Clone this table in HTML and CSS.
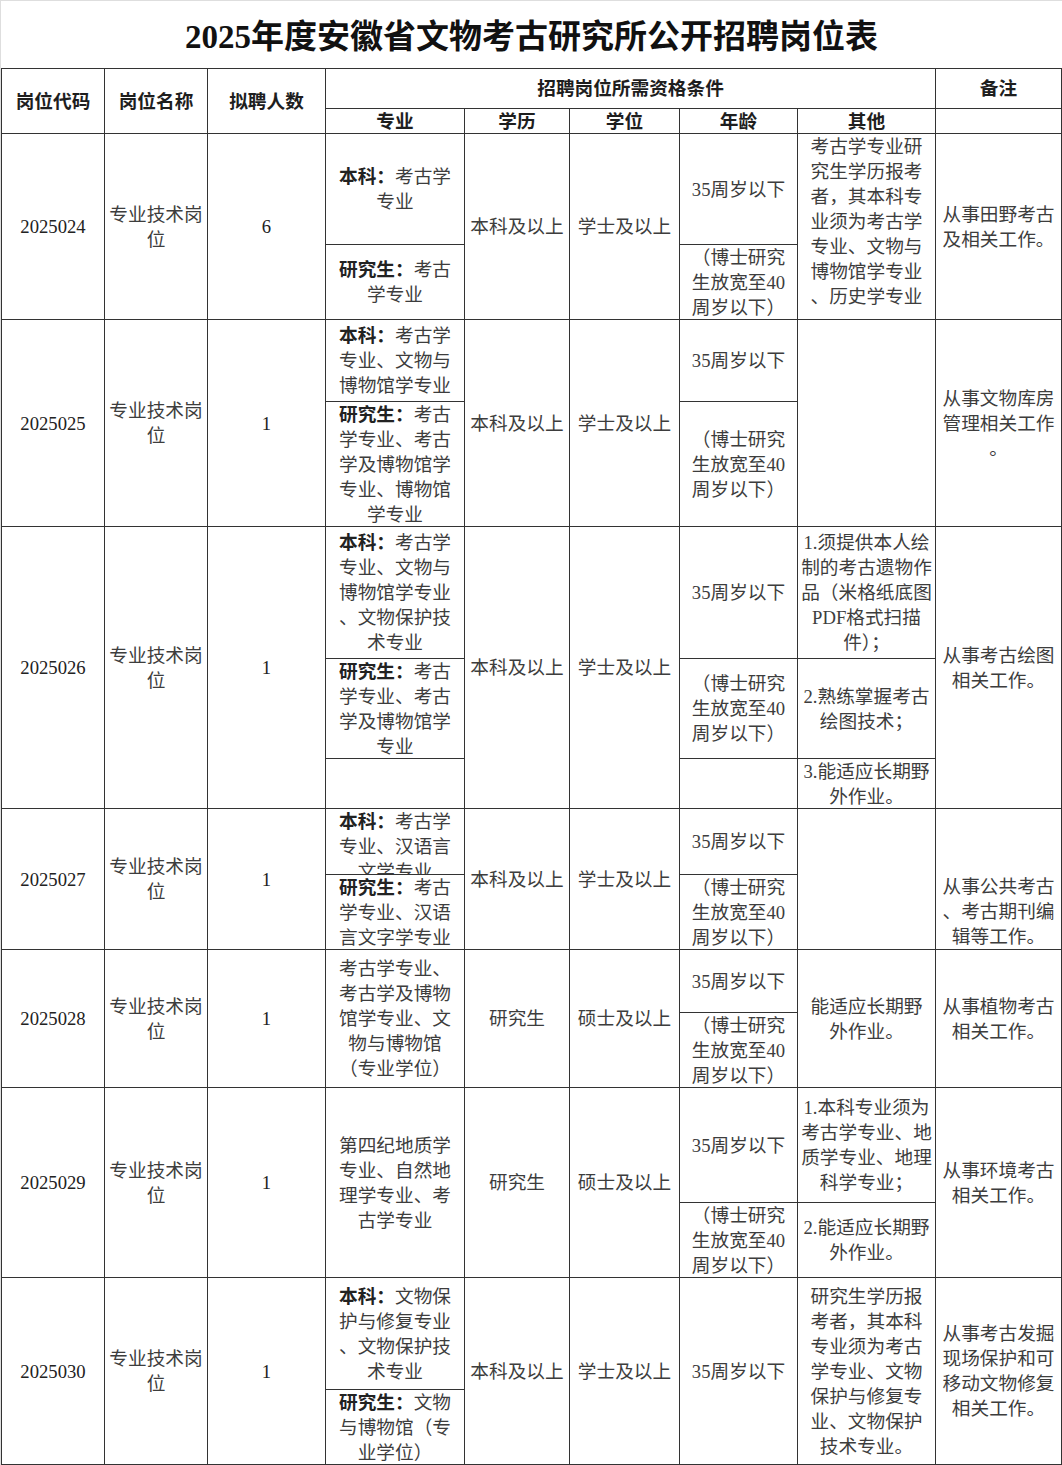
FILE: index.html
```html
<!DOCTYPE html>
<html lang="zh-CN">
<head>
<meta charset="utf-8">
<title>2025年度安徽省文物考古研究所公开招聘岗位表</title>
<link rel="stylesheet" href="styles.css">
</head>
<body>
<div class="page">
  <h1 class="title">2025年度安徽省文物考古研究所公开招聘岗位表</h1>
  <div class="table">
    <div class="row head">
      <div class="cell code span"><p>岗位代码</p></div>
      <div class="cell name span"><p>岗位名称</p></div>
      <div class="cell count span"><p>拟聘人数</p></div>
      <div class="cell quals"><p>招聘岗位所需资格条件</p></div>
      <div class="cell note"><p>备注</p></div>
      <div class="cell major"><p>专业</p></div>
      <div class="cell edu"><p>学历</p></div>
      <div class="cell degree"><p>学位</p></div>
      <div class="cell age"><p>年龄</p></div>
      <div class="cell other"><p>其他</p></div>
      <div class="cell note"></div>
    </div>

    <div class="row r24">
      <div class="cell code span"><p>2025024</p></div>
      <div class="cell name span"><p>专业技术岗<br>位</p></div>
      <div class="cell count span"><p>6</p></div>
      <div class="cell major"><p><b>本科：</b>考古学<br>专业</p></div>
      <div class="cell edu span"><p>本科及以上</p></div>
      <div class="cell degree span"><p>学士及以上</p></div>
      <div class="cell age"><p>35周岁以下</p></div>
      <div class="cell other span top"><p>考古学专业研<br>究生学历报考<br>者，其本科专<br>业须为考古学<br>专业、文物与<br>博物馆学专业<br>、历史学专业</p></div>
      <div class="cell note span"><p>从事田野考古<br>及相关工作。</p></div>
      <div class="cell major"><p><b>研究生：</b>考古<br>学专业</p></div>
      <div class="cell age"><p>（博士研究<br>生放宽至40<br>周岁以下）</p></div>
    </div>

    <div class="row r25">
      <div class="cell code span"><p>2025025</p></div>
      <div class="cell name span"><p>专业技术岗<br>位</p></div>
      <div class="cell count span"><p>1</p></div>
      <div class="cell major"><p><b>本科：</b>考古学<br>专业、文物与<br>博物馆学专业</p></div>
      <div class="cell edu span"><p>本科及以上</p></div>
      <div class="cell degree span"><p>学士及以上</p></div>
      <div class="cell age"><p>35周岁以下</p></div>
      <div class="cell other span"></div>
      <div class="cell note span"><p>从事文物库房<br>管理相关工作<br>。</p></div>
      <div class="cell major"><p><b>研究生：</b>考古<br>学专业、考古<br>学及博物馆学<br>专业、博物馆<br>学专业</p></div>
      <div class="cell age"><p>（博士研究<br>生放宽至40<br>周岁以下）</p></div>
    </div>

    <div class="row r26">
      <div class="cell code span"><p>2025026</p></div>
      <div class="cell name span"><p>专业技术岗<br>位</p></div>
      <div class="cell count span"><p>1</p></div>
      <div class="cell major"><p><b>本科：</b>考古学<br>专业、文物与<br>博物馆学专业<br>、文物保护技<br>术专业</p></div>
      <div class="cell edu span"><p>本科及以上</p></div>
      <div class="cell degree span"><p>学士及以上</p></div>
      <div class="cell age"><p>35周岁以下</p></div>
      <div class="cell other tight"><p>1.须提供本人绘<br>制的考古遗物作<br>品（米格纸底图<br>PDF格式扫描<br>件）；</p></div>
      <div class="cell note span"><p>从事考古绘图<br>相关工作。</p></div>
      <div class="cell major"><p><b>研究生：</b>考古<br>学专业、考古<br>学及博物馆学<br>专业</p></div>
      <div class="cell age"><p>（博士研究<br>生放宽至40<br>周岁以下）</p></div>
      <div class="cell other tight"><p>2.熟练掌握考古<br>绘图技术；</p></div>
      <div class="cell major"></div>
      <div class="cell age"></div>
      <div class="cell other tight"><p>3.能适应长期野<br>外作业。</p></div>
    </div>

    <div class="row r27">
      <div class="cell code span"><p>2025027</p></div>
      <div class="cell name span"><p>专业技术岗<br>位</p></div>
      <div class="cell count span"><p>1</p></div>
      <div class="cell major"><p><b>本科：</b>考古学<br>专业、汉语言<br>文学专业</p></div>
      <div class="cell edu span"><p>本科及以上</p></div>
      <div class="cell degree span"><p>学士及以上</p></div>
      <div class="cell age"><p>35周岁以下</p></div>
      <div class="cell other span"></div>
      <div class="cell note span bottom"><p>从事公共考古<br>、考古期刊编<br>辑等工作。</p></div>
      <div class="cell major"><p><b>研究生：</b>考古<br>学专业、汉语<br>言文字学专业</p></div>
      <div class="cell age"><p>（博士研究<br>生放宽至40<br>周岁以下）</p></div>
    </div>

    <div class="row r28">
      <div class="cell code span"><p>2025028</p></div>
      <div class="cell name span"><p>专业技术岗<br>位</p></div>
      <div class="cell count span"><p>1</p></div>
      <div class="cell major span"><p>考古学专业、<br>考古学及博物<br>馆学专业、文<br>物与博物馆<br>（专业学位）</p></div>
      <div class="cell edu span"><p>研究生</p></div>
      <div class="cell degree span"><p>硕士及以上</p></div>
      <div class="cell age"><p>35周岁以下</p></div>
      <div class="cell other span"><p>能适应长期野<br>外作业。</p></div>
      <div class="cell note span"><p>从事植物考古<br>相关工作。</p></div>
      <div class="cell age"><p>（博士研究<br>生放宽至40<br>周岁以下）</p></div>
    </div>

    <div class="row r29">
      <div class="cell code span"><p>2025029</p></div>
      <div class="cell name span"><p>专业技术岗<br>位</p></div>
      <div class="cell count span"><p>1</p></div>
      <div class="cell major span"><p>第四纪地质学<br>专业、自然地<br>理学专业、考<br>古学专业</p></div>
      <div class="cell edu span"><p>研究生</p></div>
      <div class="cell degree span"><p>硕士及以上</p></div>
      <div class="cell age"><p>35周岁以下</p></div>
      <div class="cell other tight"><p>1.本科专业须为<br>考古学专业、地<br>质学专业、地理<br>科学专业；</p></div>
      <div class="cell note span"><p>从事环境考古<br>相关工作。</p></div>
      <div class="cell age"><p>（博士研究<br>生放宽至40<br>周岁以下）</p></div>
      <div class="cell other tight"><p>2.能适应长期野<br>外作业。</p></div>
    </div>

    <div class="row r30">
      <div class="cell code span"><p>2025030</p></div>
      <div class="cell name span"><p>专业技术岗<br>位</p></div>
      <div class="cell count span"><p>1</p></div>
      <div class="cell major"><p><b>本科：</b>文物保<br>护与修复专业<br>、文物保护技<br>术专业</p></div>
      <div class="cell edu span"><p>本科及以上</p></div>
      <div class="cell degree span"><p>学士及以上</p></div>
      <div class="cell age span"><p>35周岁以下</p></div>
      <div class="cell other span"><p>研究生学历报<br>考者，其本科<br>专业须为考古<br>学专业、文物<br>保护与修复专<br>业、文物保护<br>技术专业。</p></div>
      <div class="cell note span"><p>从事考古发掘<br>现场保护和可<br>移动文物修复<br>相关工作。</p></div>
      <div class="cell major"><p><b>研究生：</b>文物<br>与博物馆（专<br>业学位）</p></div>
    </div>
  </div>
</div>
</body>
</html>
```

FILE: styles.css
```css
* {
  box-sizing: border-box;
}

html, body {
  margin: 0;
  padding: 0;
  background: #ffffff;
}

body {
  font-family: "Liberation Serif", "Noto Sans CJK SC", serif;
  color: #3d3d3d;
}

.page {
  width: 1062px;
  border-top: 1px solid #dedede;
  border-left: 1px solid #dedede;
}

.title {
  margin: 0;
  height: 67px;
  padding-top: 4px;
  display: flex;
  align-items: center;
  justify-content: center;
  font-size: 33px;
  line-height: 40px;
  font-weight: bold;
  color: #111111;
}

.table {
  width: 1061px;
  display: flex;
  flex-direction: column;
  gap: 1px;
  padding: 1px;
  background: #333333;
}

.row {
  display: grid;
  grid-template-columns: 102px 102px 117px 138px 104px 109px 117px 137px 125px;
  gap: 1px;
}

.head { grid-template-rows: 39px 24px; }
.r24 { grid-template-rows: 110px 74px; }
.r25 { grid-template-rows: 81px 124px; }
.r26 { grid-template-rows: 131px 99px 49px; }
.r27 { grid-template-rows: 65px 74px; }
.r28 { grid-template-rows: 62px 74px; }
.r29 { grid-template-rows: 114px 74px; }
.r30 { grid-template-rows: 111px 74px; }

.cell {
  background: #ffffff;
  display: flex;
  flex-direction: column;
  justify-content: center;
  justify-content: safe center;
  text-align: center;
  overflow: hidden;
  min-height: 0;
  padding: 0 4px;
  font-size: 18.67px;
  line-height: 25px;
}

.cell p {
  margin: 0;
}

.cell b {
  font-weight: bold;
  color: #222222;
}

/* column placement */
.code { grid-column: 1; color: #222222; }
.name { grid-column: 2; }
.count { grid-column: 3; color: #222222; }
.major { grid-column: 4; padding: 0 10px; }
.edu { grid-column: 5; }
.degree { grid-column: 6; }
.age { grid-column: 7; padding: 0 10px; }
.other { grid-column: 8; padding: 0 10px; }
.note { grid-column: 9; }
.quals { grid-column: 4 / 9; }

.span {
  grid-row: 1 / -1;
}

.other.tight {
  padding: 0 2px;
}

.top {
  justify-content: flex-start;
}

.bottom {
  justify-content: flex-end;
}

.head .cell {
  font-weight: bold;
  color: #1e1e1e;
}
```
